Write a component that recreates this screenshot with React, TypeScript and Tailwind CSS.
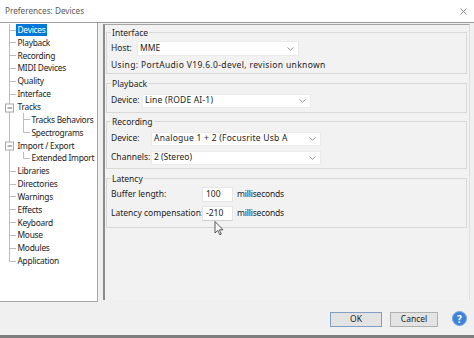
import React from 'react';

const H = 12.85;
const MID = 6.5;

type Item = { label: string; level: 0 | 1; expander?: boolean; last?: boolean; lastChild?: boolean; selected?: boolean };

const items: Item[] = [
  { label: 'Devices', level: 0, selected: true },
  { label: 'Playback', level: 0 },
  { label: 'Recording', level: 0 },
  { label: 'MIDI Devices', level: 0 },
  { label: 'Quality', level: 0 },
  { label: 'Interface', level: 0 },
  { label: 'Tracks', level: 0, expander: true },
  { label: 'Tracks Behaviors', level: 1 },
  { label: 'Spectrograms', level: 1, lastChild: true },
  { label: 'Import / Export', level: 0, expander: true },
  { label: 'Extended Import', level: 1, lastChild: true },
  { label: 'Libraries', level: 0 },
  { label: 'Directories', level: 0 },
  { label: 'Warnings', level: 0 },
  { label: 'Effects', level: 0 },
  { label: 'Keyboard', level: 0 },
  { label: 'Mouse', level: 0 },
  { label: 'Modules', level: 0 },
  { label: 'Application', level: 0, last: true },
];

const LINE = '#bcbcbc';

function TreeRow({ item }: { item: Item }) {
  return (
    <div className="flex h-[12.85px] items-center">
      <svg width={16} height={H} className="shrink-0">
        <line x1={9.5} y1={0} x2={9.5} y2={item.last ? MID : H} stroke={LINE} />
        {item.level === 0 && !item.expander && <line x1={9.5} y1={MID} x2={16} y2={MID} stroke={LINE} />}
        {item.expander && (
          <>
            <rect x={5.5} y={MID - 3.5} width={8} height={8} fill="white" stroke="#a8a8a8" />
            <line x1={7.5} y1={MID + 0.5} x2={12} y2={MID + 0.5} stroke="#666" />
          </>
        )}
      </svg>
      {item.level === 1 && (
        <svg width={14} height={H} className="shrink-0">
          <line x1={7.5} y1={0} x2={7.5} y2={item.lastChild ? MID : H} stroke={LINE} />
          <line x1={7.5} y1={MID} x2={14} y2={MID} stroke={LINE} />
        </svg>
      )}
      <span
        className={
          'px-[1.5px] h-[12px] leading-[12px] whitespace-nowrap ' +
          (item.selected ? 'bg-[#0078d7] text-white' : 'text-[#222]')
        }
      >
        {item.label}
      </span>
    </div>
  );
}

function Chevron() {
  return (
    <svg width={7} height={4} viewBox="0 0 7 4" className="shrink-0">
      <polyline points="0.5,0.5 3.5,3.2 6.5,0.5" fill="none" stroke="#8a8a8a" strokeWidth={0.9} />
    </svg>
  );
}

function Select({ className, text, textClass = '' }: { className: string; text: string; textClass?: string }) {
  return (
    <div className={'bg-white border border-[#ebebeb] flex items-center justify-between pl-[2px] pr-[4px] ' + className}>
      <span className={'whitespace-nowrap ' + textClass}>{text}</span>
      <Chevron />
    </div>
  );
}

function Group({ title, className, children }: { title: string; className: string; children: React.ReactNode }) {
  return (
    <fieldset className={'border border-[#d8d8d8] px-[4px] ' + className}>
      <legend className="ml-0 px-[1px] h-[11px] leading-[11px]">{title}</legend>
      {children}
    </fieldset>
  );
}

export default function App() {
  return (
    <div className="w-[474px] h-[338px] bg-[#f0f0f0] flex flex-col overflow-hidden font-['Noto_Sans',sans-serif] text-[8.5px] text-[#222] relative">
      {/* Title bar */}
      <div className="h-[23px] bg-white border-b border-[#9c9c9c] flex items-center justify-between pl-[5px] pr-[7px] shrink-0">
        <span className="text-[#5a5a5a] text-[8.2px]">Preferences: Devices</span>
        <svg width={7} height={7} viewBox="0 0 7 7">
          <line x1={0.5} y1={0.5} x2={6.5} y2={6.5} stroke="#8a8a8a" strokeWidth={1} />
          <line x1={6.5} y1={0.5} x2={0.5} y2={6.5} stroke="#8a8a8a" strokeWidth={1} />
        </svg>
      </div>

      {/* Body */}
      <div className="flex h-[279px] shrink-0">
        <div className="w-[98px] bg-white border-r border-b border-[#a8a8a8] pt-[0.5px] flex flex-col text-[8.4px] tracking-[-0.25px] overflow-hidden">
          {items.map((it) => (
            <TreeRow key={it.label} item={it} />
          ))}
        </div>

        <div className="ml-[5px] mt-[1px] w-[367px] h-[276px] border-l-2 border-l-[#8c8c8c] border-t border-t-[#a4a4a4] border-r border-r-[#dedede] bg-[#f2f2f2] flex flex-col pl-[1px] pr-[2px]">
          <Group title="Interface" className="mt-[1.5px] pb-[3px]">
            <div className="mt-[3.5px] h-[15px] flex items-center">
              <span className="w-[26px]">Host:</span>
              <Select className="w-[162px] h-[15px]" text="MME" />
            </div>
            <div className="mt-[2.5px] h-[11px] leading-[11px] whitespace-nowrap tracking-[0.35px]">
              Using: PortAudio V19.6.0-devel, revision unknown
            </div>
          </Group>

          <Group title="Playback" className="mt-[4.5px] pb-[4px]">
            <div className="mt-[4.5px] h-[14px] flex items-center">
              <span className="w-[31px]">Device:</span>
              <Select className="w-[169px] h-[14px]" text="Line (RODE AI-1)" textClass="tracking-[0.2px]" />
            </div>
          </Group>

          <Group title="Recording" className="mt-[3.5px] pb-[3px]">
            <div className="mt-[4.5px] h-[14px] flex items-center">
              <span className="w-[40px]">Device:</span>
              <Select className="w-[170px] h-[14px]" text="Analogue 1 + 2 (Focusrite Usb A" textClass="tracking-[0.25px]" />
            </div>
            <div className="mt-[5px] h-[14px] flex items-center">
              <span className="w-[40px]">Channels:</span>
              <Select className="w-[170px] h-[14px]" text="2 (Stereo)" />
            </div>
          </Group>

          <Group title="Latency" className="mt-[4.5px] pb-[6px]">
            <div className="mt-[2.5px] h-[15px] flex items-center">
              <span className="w-[91px]">Buffer length:</span>
              <div className="w-[31px] h-[15px] bg-white border border-[#e6e6e6] flex items-center pl-[3px]">100</div>
              <span className="ml-[4px] tracking-[-0.2px]">milliseconds</span>
            </div>
            <div className="mt-[4.5px] h-[15px] flex items-center">
              <span className="w-[91px] whitespace-nowrap">Latency compensation:</span>
              <div className="w-[31px] h-[15px] bg-white border border-[#e6e6e6] border-b-[#cfcfcf] flex items-center pl-[3px]">-210</div>
              <span className="ml-[4px] tracking-[-0.2px]">milliseconds</span>
            </div>
          </Group>
        </div>
      </div>

      {/* Footer */}
      <div className="h-[33px] shrink-0 flex items-start justify-end pt-[10px] pr-[7px]">
        <button className="w-[52px] h-[15px] bg-[#e3e3e3] border border-[#7f9fc4] flex items-center justify-center text-[#222]">
          OK
        </button>
        <button className="ml-[8px] w-[48px] h-[15px] bg-[#e3e3e3] border border-[#b0b0b0] flex items-center justify-center text-[#222]">
          Cancel
        </button>
        <div className="ml-[14px] -mt-[1px] w-[15px] h-[15px] rounded-full bg-[#3f82d8] border border-[#6ea3e6] flex items-center justify-center text-white font-bold text-[10px] leading-none">
          ?
        </div>
      </div>

      <div className="h-[3px] shrink-0 bg-[#7e7e7e]" />

      {/* mouse cursor */}
      <svg className="absolute left-[214px] top-[221px]" width={10} height={15} viewBox="0 0 10 15">
        <path d="M1 0.5 L1 12 L3.8 9.4 L5.8 13.8 L7.3 13.1 L5.4 8.8 L9 8.8 Z" fill="#fafafa" stroke="#333" strokeWidth={0.8} />
      </svg>
    </div>
  );
}
